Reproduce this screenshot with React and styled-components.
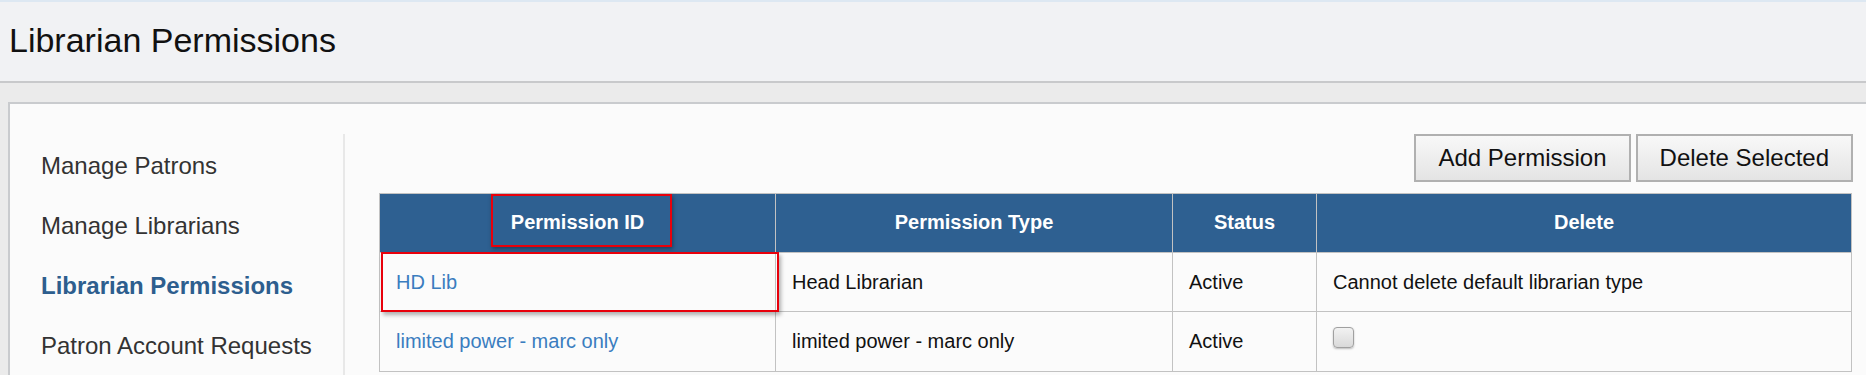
import styled, { createGlobalStyle } from "styled-components";

const GlobalStyle = createGlobalStyle`
  html, body {
    margin: 0;
    padding: 0;
    background: #ebebeb;
    overflow: hidden;
  }
  body {
    font-family: "Liberation Sans", Arial, sans-serif;
    color: #222;
  }
`;

const navItems = [
  { label: "Manage Patrons" },
  { label: "Manage Librarians" },
  { label: "Librarian Permissions", active: true },
  { label: "Patron Account Requests" },
];

const permissions = [
  {
    id: "HD Lib",
    type: "Head Librarian",
    status: "Active",
    locked: true,
    highlight: true,
  },
  {
    id: "limited power - marc only",
    type: "limited power - marc only",
    status: "Active",
  },
];

const App = () => {
  return (
    <>
      <GlobalStyle />
      <Page>
        <Header>
          <Title>Librarian Permissions</Title>
        </Header>
        <Body>
          <Panel>
            <Sidebar>
              {navItems.map((item) => (
                <NavItem key={item.label} $active={item.active}>
                  {item.label}
                </NavItem>
              ))}
            </Sidebar>
            <Content>
              <Toolbar>
                <Button>Add Permission</Button>
                <Button>Delete Selected</Button>
              </Toolbar>
              <Table>
                <colgroup>
                  <col style={{ width: 396 }} />
                  <col style={{ width: 397 }} />
                  <col style={{ width: 144 }} />
                  <col />
                </colgroup>
                <thead>
                  <tr>
                    <Th>
                      Permission ID
                      <HeadMark />
                    </Th>
                    <Th>Permission Type</Th>
                    <Th>Status</Th>
                    <Th>Delete</Th>
                  </tr>
                </thead>
                <tbody>
                  {permissions.map((p) => (
                    <tr key={p.id}>
                      <Td>
                        <IdLink href="#">{p.id}</IdLink>
                        {p.highlight && <CellMark />}
                      </Td>
                      <Td>{p.type}</Td>
                      <Td>{p.status}</Td>
                      <Td>
                        {p.locked ? (
                          "Cannot delete default librarian type"
                        ) : (
                          <Check type="checkbox" />
                        )}
                      </Td>
                    </tr>
                  ))}
                </tbody>
              </Table>
            </Content>
          </Panel>
        </Body>
      </Page>
    </>
  );
};

const Page = styled.div`
  width: 1866px;
  height: 375px;
  overflow: hidden;
  border-top: 2px solid #dde8f2;
  box-sizing: border-box;
`;

const Header = styled.header`
  height: 79px;
  background: #f1f2f4;
  border-bottom: 2px solid #c8c9cb;
  display: flex;
  align-items: center;
  padding: 0 0 0 9px;
`;

const Title = styled.h1`
  margin: 0;
  font-size: 34px;
  font-weight: normal;
  color: #111;
  position: relative;
  top: -1px;
`;

const Body = styled.div`
  padding: 19px 0 0 8px;
  background: #ebebeb;
`;

const Panel = styled.div`
  display: flex;
  background: #fbfbfb;
  border-top: 2px solid #c9cbce;
  border-left: 2px solid #c9cbce;
  padding-top: 30px;
  min-height: 300px;
`;

const Sidebar = styled.nav`
  width: 302px;
  flex-shrink: 0;
  padding: 2px 0 0 31px;
  border-right: 2px solid #e8e8e8;
  display: flex;
  flex-direction: column;
`;

const NavItem = styled.a`
  display: block;
  height: 60px;
  line-height: 60px;
  font-size: 24px;
  white-space: nowrap;
  color: ${({ $active }) => ($active ? "#2d5e8e" : "#333")};
  font-weight: ${({ $active }) => ($active ? "bold" : "normal")};
  cursor: pointer;
`;

const Content = styled.main`
  flex: 1;
  padding: 0 13px 0 34px;
  display: flex;
  flex-direction: column;
`;

const Toolbar = styled.div`
  display: flex;
  justify-content: flex-end;
  gap: 5px;
  margin-bottom: 11px;
`;

const Button = styled.button`
  height: 48px;
  padding: 0 22px;
  font-family: "Liberation Sans", Arial, sans-serif;
  font-size: 24px;
  color: #111;
  background: linear-gradient(#f8f8f8, #e4e4e4);
  border: 2px solid #b0b0b0;
  border-radius: 0;
  cursor: pointer;
`;

const Table = styled.table`
  width: 1473px;
  border-collapse: collapse;
  table-layout: fixed;
  font-size: 20px;
  line-height: 1.42857;
`;

const Th = styled.th`
  position: relative;
  background: #2e6091;
  color: #fff;
  font-weight: bold;
  text-align: center;
  padding: 14px 16px 15px;
  border: 1px solid #c2c2c2;
  border-bottom: none;
`;

const Td = styled.td`
  position: relative;
  padding: 15px 16px;
  border: 1px solid #c2c2c2;
  color: #111;
  vertical-align: top;
`;

const IdLink = styled.a`
  color: #3a7dbf;
  text-decoration: none;
`;

const HeadMark = styled.span`
  position: absolute;
  left: 111px;
  right: 103px;
  top: 0;
  bottom: 5px;
  border: 2px solid #e8000b;
  box-shadow: 1px 2px 4px rgba(0, 0, 0, 0.35);
  pointer-events: none;
`;

const CellMark = styled.span`
  position: absolute;
  left: 1px;
  right: -4px;
  top: -1px;
  bottom: -1px;
  border: 2px solid #e8000b;
  box-shadow: 2px 3px 4px rgba(0, 0, 0, 0.3);
  pointer-events: none;
`;

const Check = styled.input`
  appearance: none;
  display: block;
  margin: 0;
  width: 21px;
  height: 21px;
  border: 1px solid #a0a0a0;
  border-radius: 4px;
  background: linear-gradient(#f2f2f2, #d9d9d9);
  box-shadow: 0 1px 2px rgba(0, 0, 0, 0.25);
  box-sizing: border-box;
`;

export default App;
